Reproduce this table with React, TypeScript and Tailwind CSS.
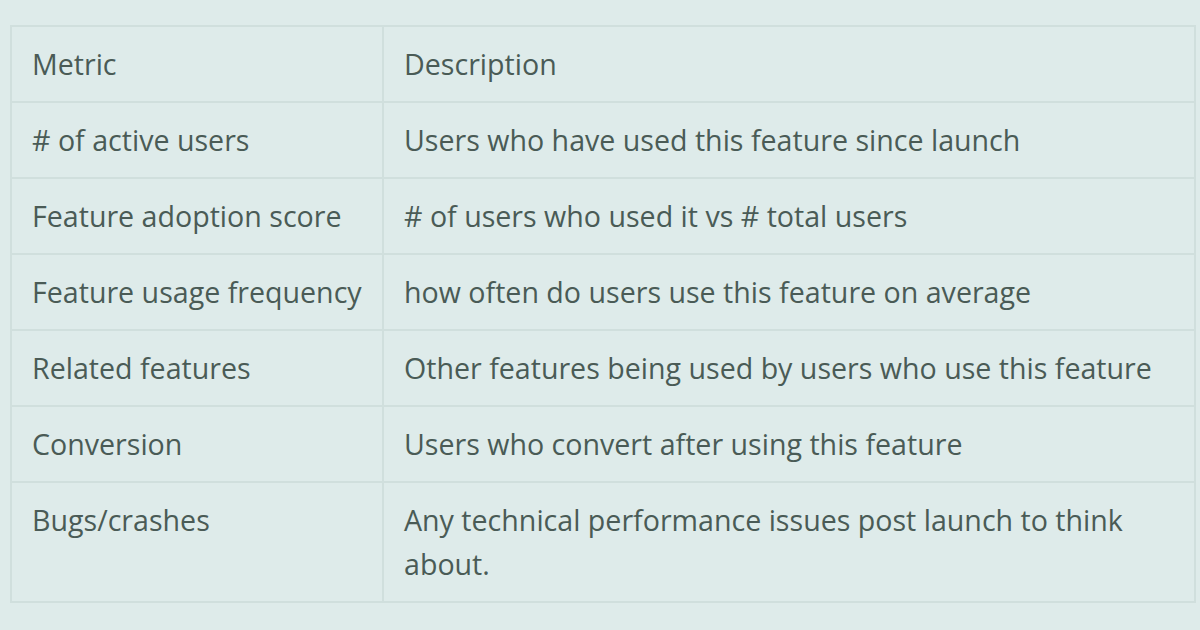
const rows: [string, string][] = [
  ["# of active users", "Users who have used this feature since launch"],
  ["Feature adoption score", "# of users who used it vs # total users"],
  ["Feature usage frequency", "how often do users use this feature on average"],
  ["Related features", "Other features being used by users who use this feature"],
  ["Conversion", "Users who convert after using this feature"],
  ["Bugs/crashes", "Any technical performance issues post launch to think about."],
];

const App = () => {
  return (
    <div className="w-[1200px] h-[630px] bg-[#deebea] pt-[25px] pl-[10px] font-['Open_Sans',sans-serif] text-[#4a5b56]">
      <table className="border-collapse w-[1186px] table-fixed text-[28.6px] leading-[44px]">
        <colgroup>
          <col className="w-[372px]" />
          <col />
        </colgroup>
        <thead>
          <tr>
            <th className="border-2 border-[#d0dfdd] px-[20px] py-[15px] text-left font-normal align-top">Metric</th>
            <th className="border-2 border-[#d0dfdd] px-[20px] py-[15px] text-left font-normal align-top">Description</th>
          </tr>
        </thead>
        <tbody>
          {rows.map(([metric, desc]) => (
            <tr key={metric}>
              <td className="border-2 border-[#d0dfdd] px-[20px] py-[15px] align-top">{metric}</td>
              <td className="border-2 border-[#d0dfdd] px-[20px] py-[15px] align-top">{desc}</td>
            </tr>
          ))}
        </tbody>
      </table>
    </div>
  );
};

export default App;
